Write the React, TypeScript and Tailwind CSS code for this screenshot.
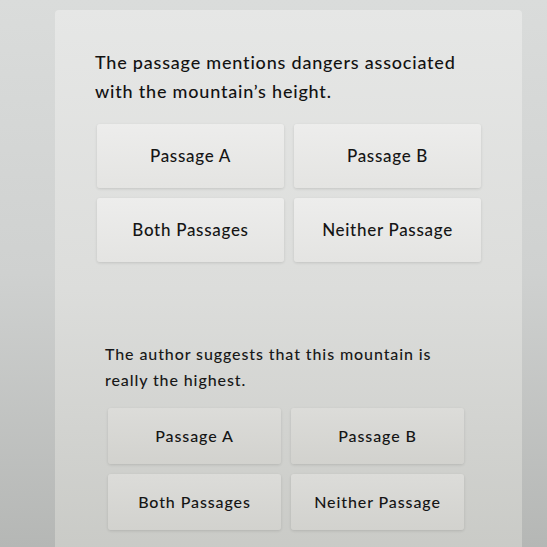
import { useState } from "react"

const OPTIONS = ["Passage A", "Passage B", "Both Passages", "Neither Passage"]

interface QuestionProps {
    prompt: string
    variant: "lg" | "sm"
}

function Question({ prompt, variant }: QuestionProps) {
    const [picked, setPicked] = useState<string | null>(null)
    const lg = variant === "lg"

    return (
        <div className={lg ? "pl-[40px]" : "pl-[50px]"}>
            <p className={lg
                ? "w-[372px] text-[18px] leading-[29px] tracking-[0.8px] text-[#121212]"
                : "w-[345px] text-[16px] leading-[26px] tracking-[0.9px] text-[#181818]"}>
                {prompt}
            </p>
            <div className={lg
                ? "mt-[18px] ml-[2px] grid w-[384px] grid-cols-2 gap-[10px]"
                : "mt-[15px] ml-[3px] grid w-[356px] grid-cols-2 gap-[10px]"}>
                {OPTIONS.map(opt => (
                    <button
                        key={opt}
                        onClick={() => setPicked(opt)}
                        className={`flex items-center justify-center rounded-[3px] shadow-[0_1px_3px_rgba(0,0,0,0.12)] ${lg
                            ? "h-[64px] text-[17px] tracking-[0.7px] bg-gradient-to-b from-[#ededec] to-[#e4e4e2]"
                            : "h-[56px] text-[16px] tracking-[0.9px] bg-gradient-to-b from-[#dcdcd9] to-[#d2d2ce]"} ${picked === opt ? "ring-2 ring-[#4a90d9]" : ""} text-[#151515]`}
                    >
                        {opt}
                    </button>
                ))}
            </div>
        </div>
    )
}

export default function App() {
    return (
        <div
            className="h-[547px] w-[547px] overflow-hidden bg-gradient-to-b from-[#dadcdb] via-[#cfd1d0] to-[#b5b7b5] pt-[10px] pl-[55px]"
            style={{ fontFamily: "Lato, 'Open Sans', sans-serif" }}
        >
            <div className="h-[560px] w-[467px] rounded-[4px] bg-gradient-to-b from-[#e6e7e6] via-[#dcdddb] to-[#c8c9c5] pt-[38px] font-medium">
                <Question
                    variant="lg"
                    prompt="The passage mentions dangers associated with the mountain’s height."
                />
                <div className="h-[79px]" />
                <Question
                    variant="sm"
                    prompt="The author suggests that this mountain is really the highest."
                />
            </div>
        </div>
    )
}
